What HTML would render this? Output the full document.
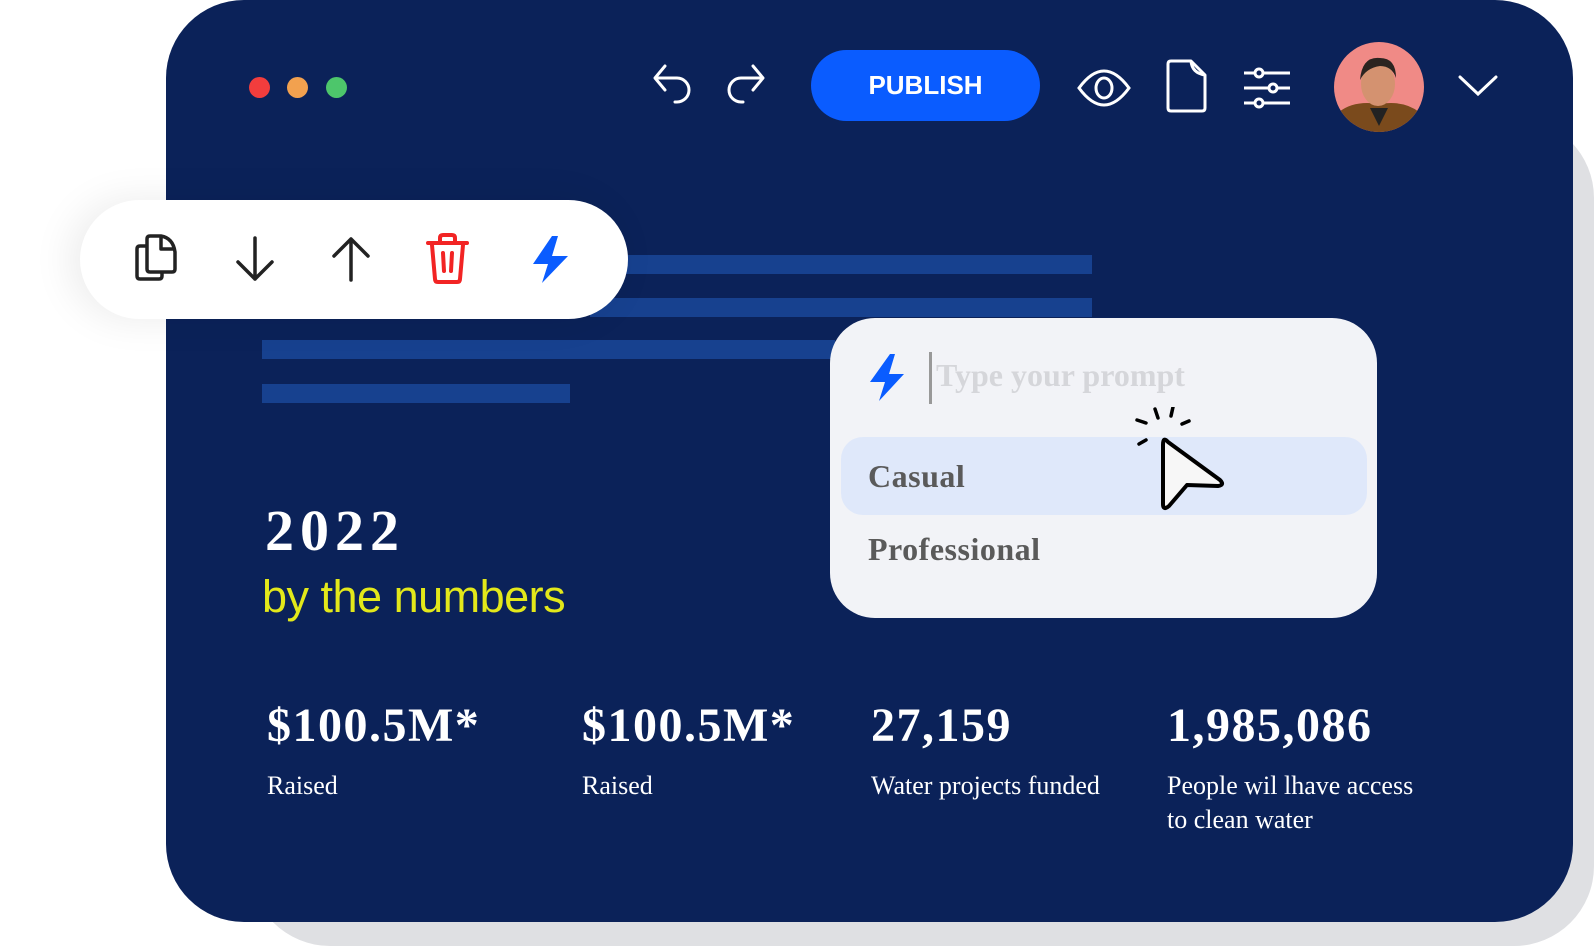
<!DOCTYPE html>
<html><head><meta charset="utf-8"><style>
*{margin:0;padding:0;box-sizing:border-box}
body{width:1594px;height:947px;background:#fff;position:relative;overflow:hidden;font-family:"Liberation Sans",sans-serif}
.abs{position:absolute}
.shadow{left:250px;top:118px;width:1344px;height:828px;background:#dfe0e3;border-radius:80px}
.card{left:166px;top:0;width:1407px;height:922px;background:#0b2259;border-radius:78px}
.dot{width:21px;height:21px;border-radius:50%;top:77px}
.pub{left:811px;top:50px;width:229px;height:71px;background:#0a5cff;border-radius:36px;color:#fff;font-weight:bold;font-size:26px;text-align:center;line-height:71px}
.bar{background:#17418f;height:19px}
.tool{left:80px;top:200px;width:548px;height:119px;background:#fff;border-radius:60px;box-shadow:-10px 0 40px rgba(0,0,0,.08)}
.panel{left:830px;top:318px;width:547px;height:300px;background:#f2f3f7;border-radius:45px}
.hl{left:11px;top:119px;width:526px;height:78px;background:#dfe8fa;border-radius:22px}
.serif{font-family:"Liberation Serif",serif}
.num{color:#fff;font-family:"Liberation Serif",serif;font-weight:bold;font-size:48px;letter-spacing:1.5px}
.lab{color:#fff;font-family:"Liberation Serif",serif;font-size:26px;line-height:34px}
</style></head><body>
<div class="abs shadow"></div>
<div class="abs card"></div>
<div class="abs dot" style="left:249px;background:#f23d3d"></div>
<div class="abs dot" style="left:287px;background:#f2a14f"></div>
<div class="abs dot" style="left:326px;background:#4dc66b"></div>
<svg class="abs" style="left:653px;top:62px" width="120" height="50" fill="none" stroke="#fff" stroke-width="3" stroke-linecap="round" stroke-linejoin="round">
<path d="M12 4 L2 16 L12 28 M2 16 H24 A12 12 0 0 1 24 40 H22"/>
<path d="M100 4 L110 16 L100 28 M109 16 H88 A12 12 0 0 0 88 40 H90"/>
</svg>
<div class="abs pub">PUBLISH</div>
<svg class="abs" style="left:1076px;top:60px" width="56" height="56" fill="none" stroke="#fff" stroke-width="3">
<path d="M3 28 Q28 -6 53 28 Q28 62 3 28 Z"/><ellipse cx="28" cy="28" rx="8" ry="10"/>
</svg>
<svg class="abs" style="left:1166px;top:58px" width="42" height="56" fill="none" stroke="#fff" stroke-width="3" stroke-linejoin="round">
<path d="M5 3 H25 L39 17 V50 Q39 53 36 53 H5 Q2 53 2 50 V6 Q2 3 5 3 Z M25 3 Q26 15 39 17"/>
</svg>
<svg class="abs" style="left:1243px;top:65px" width="48" height="46" stroke="#fff" stroke-width="3" fill="#0b2259">
<line x1="1" y1="8" x2="47" y2="8"/><line x1="1" y1="23" x2="47" y2="23"/><line x1="1" y1="38" x2="47" y2="38"/>
<circle cx="16" cy="8" r="4"/><circle cx="30" cy="23" r="4"/><circle cx="16" cy="38" r="4"/>
</svg>
<svg class="abs" style="left:1334px;top:42px" width="90" height="90">
<defs><clipPath id="c"><circle cx="45" cy="45" r="45"/></clipPath></defs>
<g clip-path="url(#c)"><rect width="90" height="90" fill="#f08a86"/>
<path d="M0 90 L5 70 Q20 58 45 62 Q70 58 85 70 L90 90Z" fill="#7a4a1c"/>
<ellipse cx="44" cy="42" rx="17" ry="22" fill="#d49270"/>
<path d="M26 38 Q28 14 46 16 Q62 16 62 36 Q58 24 46 24 Q32 26 26 38Z" fill="#2b2420"/>
<path d="M36 66 L45 84 L54 66Z" fill="#222"/></g>
</svg>
<svg class="abs" style="left:1458px;top:74px" width="40" height="24" fill="none" stroke="#fff" stroke-width="3" stroke-linecap="round"><path d="M2 3 L20 20 L38 3"/></svg>

<div class="abs bar" style="left:600px;top:255px;width:492px"></div>
<div class="abs bar" style="left:590px;top:298px;width:502px"></div>
<div class="abs bar" style="left:262px;top:340px;width:573px"></div>
<div class="abs bar" style="left:262px;top:384px;width:308px"></div>

<div class="abs tool"></div>
<svg class="abs" style="left:135px;top:234px" width="46" height="48" fill="none" stroke="#222" stroke-width="3.5" stroke-linejoin="round">
<path d="M12 12 H5 Q2 12 2 15 V42 Q2 45 5 45 H24 Q27 45 27 42 V38"/>
<path d="M15 2 H26 Q38 4 40 18 V35 Q40 38 37 38 H15 Q12 38 12 35 V5 Q12 2 15 2 Z M26 2 V15 H40"/>
</svg>
<svg class="abs" style="left:235px;top:236px" width="40" height="46" fill="none" stroke="#222" stroke-width="3.5" stroke-linecap="round" stroke-linejoin="round"><path d="M20 2 V43 M3 26 L20 43 L37 26"/></svg>
<svg class="abs" style="left:331px;top:236px" width="40" height="46" fill="none" stroke="#222" stroke-width="3.5" stroke-linecap="round" stroke-linejoin="round"><path d="M20 44 V3 M3 20 L20 3 L37 20"/></svg>
<svg class="abs" style="left:426px;top:233px" width="44" height="52" fill="none" stroke="#f22424" stroke-width="4" stroke-linecap="round" stroke-linejoin="round">
<path d="M2 10 H41 M14 10 V5 Q14 2 17 2 H26 Q29 2 29 5 V10 M6 12 L9 46 Q9 49 12 49 H31 Q34 49 34 46 L37 12 M17 20 L18 38 M26 20 L25 38"/>
</svg>
<svg class="abs" style="left:530px;top:236px" width="40" height="48"><path d="M22 0 L3 28 H18 L12 47 L38 20 H22 L28 0Z" fill="#0a5cff"/></svg>

<div class="abs panel">
<div class="abs hl"></div>
<svg class="abs" style="left:38px;top:36px" width="38" height="48"><path d="M22 0 L2 28 H17 L11 47 L36 20 H21 L27 0Z" fill="#0a5cff"/></svg>
<div class="abs" style="left:99px;top:34px;width:3px;height:52px;background:#999"></div>
<div class="abs serif" style="left:106px;top:39px;font-size:32px;color:#d5d6da;font-weight:bold">Type your prompt</div>
<div class="abs serif" style="left:38px;top:140px;font-size:32px;color:#5a5a5a;font-weight:bold;letter-spacing:.5px">Casual</div>
<div class="abs serif" style="left:38px;top:213px;font-size:32px;color:#5a5a5a;font-weight:bold;letter-spacing:.5px">Professional</div>
</div>
<svg class="abs" style="left:1135px;top:407px" width="95" height="118" fill="none" stroke="#000" stroke-width="3.5" stroke-linecap="round" stroke-linejoin="round">
<path d="M33 35 Q28 29 28 38 V97 Q28 104 34 99 L52 78 L83 79 Q90 78 85 73 Z" fill="#f7f7f7" stroke-width="4"/>
<path d="M2 13 L11 16 M4 37 L11 33 M20 2 L23 11 M38 0 L36 9 M54 14 L47 17"/>
</svg>

<div class="abs serif" style="left:265px;top:497px;font-size:58px;color:#fff;font-weight:bold;letter-spacing:6px">2022</div>
<div class="abs" style="left:262px;top:571px;font-size:45px;color:#e3e81a;letter-spacing:-0.5px">by the numbers</div>

<div class="abs num" style="left:267px;top:698px">$100.5M*</div>
<div class="abs lab" style="left:267px;top:769px">Raised</div>
<div class="abs num" style="left:582px;top:698px">$100.5M*</div>
<div class="abs lab" style="left:582px;top:769px">Raised</div>
<div class="abs num" style="left:871px;top:698px">27,159</div>
<div class="abs lab" style="left:871px;top:769px">Water projects funded</div>
<div class="abs num" style="left:1167px;top:698px">1,985,086</div>
<div class="abs lab" style="left:1167px;top:769px">People wil lhave access<br>to clean water</div>
</body></html>
